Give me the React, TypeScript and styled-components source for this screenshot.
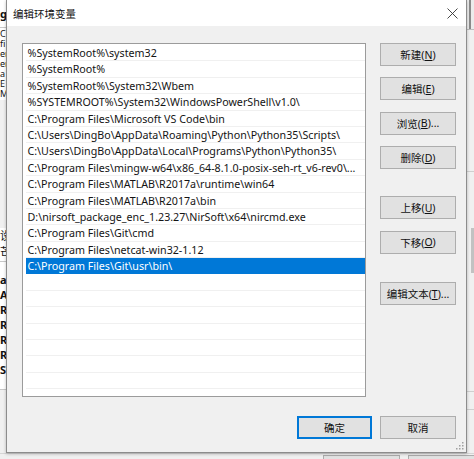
import React from "react";
import styled, { createGlobalStyle } from "styled-components";

const GlobalStyle = createGlobalStyle`
  html, body {
    margin: 0;
    padding: 0;
    background: #f0f0f0;
  }
  body {
    font-family: "Noto Sans", "Noto Sans CJK SC", sans-serif;
    font-size: 10.7px;
    color: #000;
  }
`;

const Desktop = styled.div`
  width: 474px;
  height: 459px;
  overflow: hidden;
  display: grid;
  grid-template-columns: 6px 461px 7px;
  grid-template-rows: 453px 6px;
  background: #f0f0f0;
`;

/* parent window peeking out behind the dialog */
const LeftStrip = styled.div`
  grid-row: 1 / 3;
  grid-column: 1;
  overflow: hidden;
  display: flex;
  flex-direction: column;
  background: #f0f0f0;
`;

const StripBlock = styled.div<{ $h: number; $white?: boolean; $line?: boolean }>`
  flex: none;
  height: ${(p) => p.$h}px;
  background: ${(p) => (p.$white ? "#fff" : "#f0f0f0")};
  border-bottom: ${(p) => (p.$line ? "1px solid #c8c8c8" : "none")};
  box-sizing: border-box;
  display: flex;
  flex-direction: column;
  overflow: hidden;
`;

const StripText = styled.div<{ $h: number; $bold?: boolean }>`
  flex: none;
  height: ${(p) => p.$h}px;
  line-height: ${(p) => p.$h}px;
  overflow: hidden;
  white-space: nowrap;
  font-size: ${(p) => Math.min(11, p.$h - 1)}px;
  font-weight: ${(p) => (p.$bold ? 700 : 400)};
  color: #111;
`;

const RightStrip = styled.div`
  grid-row: 1 / 3;
  grid-column: 3;
  overflow: hidden;
  display: flex;
  flex-direction: column;
  background: #f0f0f0;
`;

const RightTop = styled.div`
  flex: none;
  height: 30px;
  box-sizing: border-box;
  border-bottom: 1px solid #bdbdbd;
  background: #ececec;
  display: flex;
`;

const DarkRule = styled.div`
  width: 2px;
  margin-left: 2px;
  background: #8a8a8a;
`;

const RightSeg = styled.div<{ $h: number }>`
  flex: none;
  height: ${(p) => p.$h}px;
  box-sizing: border-box;
  border-bottom: 1px solid #cfcfcf;
  display: flex;
  justify-content: flex-end;
`;

const Thumb = styled.div`
  width: 3px;
  margin-top: 56px;
  height: 45px;
  background: #c2c2c2;
`;

const BottomStrip = styled.div`
  grid-row: 2;
  grid-column: 1 / 4;
  display: flex;
  background: #f0f0f0;
  border-top: 1px solid #d6d6d6;
  box-sizing: border-box;
`;

const ParentButton = styled.div<{ $left: number; $w: number }>`
  flex: none;
  margin-left: ${(p) => p.$left}px;
  width: ${(p) => p.$w}px;
  margin-top: 1px;
  background: #e1e1e1;
  border: 1px solid #adadad;
  border-bottom: none;
`;

/* the dialog */
const Dialog = styled.div`
  grid-row: 1;
  grid-column: 2;
  position: relative;
  display: flex;
  flex-direction: column;
  background: #f0f0f0;
  border: 1px solid #8c8c8c;
  border-top: none;
  box-shadow: 0 1px 3px rgba(0, 0, 0, 0.25);
  z-index: 1;
`;

const TitleBar = styled.div`
  flex: none;
  height: 26px;
  background: #fff;
  display: flex;
  align-items: center;
  justify-content: space-between;
  padding: 0 8px 0 6px;
`;

const Title = styled.div`
  font-family: "Noto Sans CJK SC", sans-serif;
  font-size: 10.5px;
  color: #111;
`;

const Body = styled.div`
  flex: 1;
  display: flex;
  flex-direction: column;
  padding: 17px 10px 14px 15px;
`;

const Main = styled.div`
  display: flex;
  gap: 14px;
`;

const ListBox = styled.div`
  width: 344px;
  height: 354px;
  box-sizing: border-box;
  border: 1px solid #9b9b9b;
  background: #fff;
  padding: 1px 0 0 3px;
  overflow: hidden;
`;

const Row = styled.div<{ $selected?: boolean }>`
  height: 16.4px;
  box-sizing: border-box;
  border-bottom: 1px solid ${(p) => (p.$selected ? "#0078d7" : "#f0f0f0")};
  background: ${(p) => (p.$selected ? "#0078d7" : "transparent")};
  color: ${(p) => (p.$selected ? "#fff" : "#141414")};
  padding-left: 1.5px;
  line-height: 16px;
  white-space: nowrap;
  overflow: hidden;
`;

const ButtonColumn = styled.div`
  width: 76px;
  display: flex;
  flex-direction: column;
`;

const Button = styled.div<{ $gap?: number; $w?: number; $default?: boolean }>`
  flex: none;
  width: ${(p) => p.$w ?? 76}px;
  height: 23px;
  margin-top: ${(p) => p.$gap ?? 0}px;
  box-sizing: border-box;
  background: #e1e1e1;
  border: 1px solid ${(p) => (p.$default ? "#0078d7" : "#adadad")};
  box-shadow: ${(p) => (p.$default ? "inset 0 0 0 1px #0078d7" : "none")};
  display: flex;
  align-items: center;
  justify-content: center;
  font-size: 10.5px;
  color: #111;
  white-space: nowrap;
  u {
    text-decoration: underline;
    text-underline-offset: 1px;
  }
`;

const Footer = styled.div`
  margin-top: 19px;
  display: flex;
  justify-content: flex-end;
  gap: 8px;
`;

const Grip = styled.svg`
  position: absolute;
  right: 2px;
  bottom: 2px;
`;

const paths = [
  "%SystemRoot%\\system32",
  "%SystemRoot%",
  "%SystemRoot%\\System32\\Wbem",
  "%SYSTEMROOT%\\System32\\WindowsPowerShell\\v1.0\\",
  "C:\\Program Files\\Microsoft VS Code\\bin",
  "C:\\Users\\DingBo\\AppData\\Roaming\\Python\\Python35\\Scripts\\",
  "C:\\Users\\DingBo\\AppData\\Local\\Programs\\Python\\Python35\\",
  "C:\\Program Files\\mingw-w64\\x86_64-8.1.0-posix-seh-rt_v6-rev0\\...",
  "C:\\Program Files\\MATLAB\\R2017a\\runtime\\win64",
  "C:\\Program Files\\MATLAB\\R2017a\\bin",
  "D:\\nirsoft_package_enc_1.23.27\\NirSoft\\x64\\nircmd.exe",
  "C:\\Program Files\\Git\\cmd",
  "C:\\Program Files\\netcat-win32-1.12",
  "C:\\Program Files\\Git\\usr\\bin\\",
];

const SELECTED = 13;
const TOTAL_ROWS = 22;

const sideButtons: { label: string; key: string; tail?: string; gap: number }[] = [
  { label: "新建", key: "N", gap: 0 },
  { label: "编辑", key: "E", gap: 11.4 },
  { label: "浏览", key: "B", tail: "...", gap: 11.4 },
  { label: "删除", key: "D", gap: 11.4 },
  { label: "上移", key: "U", gap: 27.2 },
  { label: "下移", key: "O", gap: 11.4 },
  { label: "编辑文本", key: "T", tail: "...", gap: 28.6 },
];

const leftUpper = ["C", "fi", "er", "er", "a", "E", "M"];
const leftLower = ["a", "A", "R", "R", "R", "R", "S"];

function CloseIcon() {
  return (
    <svg width="11" height="11" viewBox="0 0 11 11">
      <path d="M0.5 0.5 L10.5 10.5 M10.5 0.5 L0.5 10.5" stroke="#333" strokeWidth="0.9" fill="none" />
    </svg>
  );
}

function GripIcon() {
  const dots = [
    [6, 0],
    [6, 3],
    [3, 3],
    [6, 6],
    [3, 6],
    [0, 6],
  ];
  return (
    <Grip width="8" height="8" viewBox="0 0 8 8">
      {dots.map(([x, y], i) => (
        <rect key={i} x={x} y={y} width="1.5" height="1.5" fill="#a0a0a0" />
      ))}
    </Grip>
  );
}

export default function App() {
  const rows = Array.from({ length: TOTAL_ROWS }, (_, i) => paths[i] ?? "");
  return (
    <>
      <GlobalStyle />
      <Desktop>
        <LeftStrip>
          <StripBlock $h={28} $white $line>
            <StripText $h={6} />
            <StripText $h={16} $bold>
              g
            </StripText>
          </StripBlock>
          <StripBlock $h={72} $white>
            <StripText $h={1} />
            {leftUpper.map((t, i) => (
              <StripText key={i} $h={10}>
                {t}
              </StripText>
            ))}
          </StripBlock>
          <StripBlock $h={128} />
          <StripBlock $h={34} $white $line>
            <StripText $h={15}>设</StripText>
            <StripText $h={17}>芒</StripText>
          </StripBlock>
          <StripBlock $h={128} $white $line>
            <StripText $h={10} />
            {leftLower.map((t, i) => (
              <StripText key={i} $h={15} $bold>
                {t}
              </StripText>
            ))}
          </StripBlock>
        </LeftStrip>

        <Dialog>
          <TitleBar>
            <Title>编辑环境变量</Title>
            <CloseIcon />
          </TitleBar>
          <Body>
            <Main>
              <ListBox>
                {rows.map((p, i) => (
                  <Row key={i} $selected={i === SELECTED}>
                    {p}
                  </Row>
                ))}
              </ListBox>
              <ButtonColumn>
                {sideButtons.map((b) => (
                  <Button key={b.key} $gap={b.gap}>
                    {b.label}(<u>{b.key}</u>){b.tail}
                  </Button>
                ))}
              </ButtonColumn>
            </Main>
            <Footer>
              <Button $w={75} $default>
                确定
              </Button>
              <Button>取消</Button>
            </Footer>
          </Body>
          <GripIcon />
        </Dialog>

        <RightStrip>
          <RightTop>
            <DarkRule />
          </RightTop>
          <RightSeg $h={142} />
          <RightSeg $h={220}>
            <Thumb />
          </RightSeg>
          <RightSeg $h={18} />
        </RightStrip>

        <BottomStrip>
          <ParentButton $left={323} $w={75} />
          <ParentButton $left={8} $w={76} />
        </BottomStrip>
      </Desktop>
    </>
  );
}
